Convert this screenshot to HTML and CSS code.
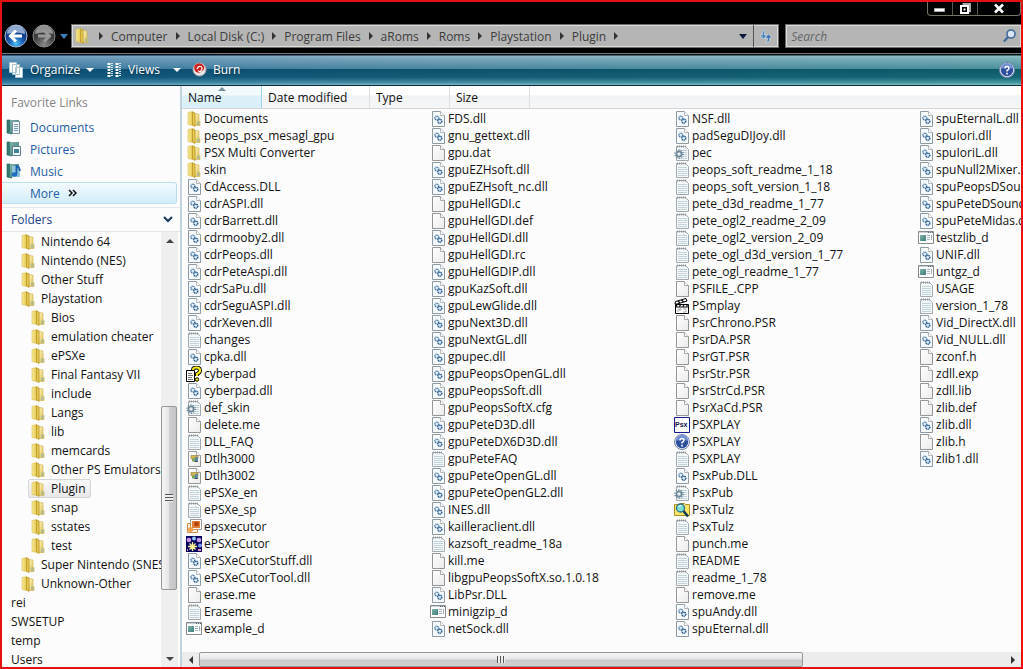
FILE: index.html
```html
<!DOCTYPE html>
<html lang="en">
<head>
    <meta charset="utf-8">
    <title>Plugin</title>
    <link rel="stylesheet" href="styles.css">
</head>
<body>
    <!-- icon sprite -->
    <svg class="sprite" aria-hidden="true">
        <defs>
            <linearGradient id="gold" x1="0" x2="1"><stop offset="0" stop-color="#f7eb9c"/><stop offset="1" stop-color="#e2c444"/></linearGradient>
            <linearGradient id="goldPale" x1="0" x2="1" y2="1"><stop offset="0" stop-color="#fff6bf"/><stop offset="1" stop-color="#dcbc48"/></linearGradient>
            <linearGradient id="paper" x2="1" y2="1"><stop offset="0" stop-color="#fff"/><stop offset="1" stop-color="#ebebeb"/></linearGradient>
            <linearGradient id="teal" x2="1" y2="1"><stop offset="0" stop-color="#7fb3a8"/><stop offset="1" stop-color="#3c7c7c"/></linearGradient>
            <radialGradient id="blueBall" cy=".85"><stop offset="0" stop-color="#4fc4f5"/><stop offset=".6" stop-color="#1c62b8"/><stop offset="1" stop-color="#153f86"/></radialGradient>
            <radialGradient id="greyBall" cy=".9"><stop offset="0" stop-color="#8a8a8a"/><stop offset="1" stop-color="#3c3c3c"/></radialGradient>
        </defs>
        <symbol id="folder" viewBox="0 0 16 16">
            <path d="M2 1.500l5-1v14l-5-1z" fill="url(#gold)" stroke="#d8bc50" stroke-width=".6"/>
            <path d="M8.500 2.500l4.500 .5v6.500l1 1v4H8.500z" fill="url(#goldPale)" stroke="#cdae48" stroke-width=".6"/>
            <path d="M6.500 1l2.500 1v13.500L6.500 14z" fill="#e6c84c" stroke="#b9962c" stroke-width=".8"/>
            <path d="M11 10.500h2.500V14H11z" fill="#aebc96"/>
        </symbol>
        <symbol id="page" viewBox="0 0 16 16">
            <path d="M2.500 .5h8l4 4v11h-12z" fill="url(#paper)" stroke="#969696"/>
            <path d="M10.500 .5v4h4" fill="#fff" stroke="#a8a8a8"/>
        </symbol>
        <symbol id="dll" viewBox="0 0 16 16">
            <path d="M2.500 .5h8l4 4v11h-12z" fill="#f6fafd" stroke="#8f9ba3"/>
            <path d="M10.500 .5v4h4" fill="#fff" stroke="#b4b8ba"/>
            <circle cx="6.800" cy="7" r="1.900" fill="#e4f0fa" stroke="#4b7aa8" stroke-width="1.400" stroke-dasharray="1.200 .5"/>
            <circle cx="9.800" cy="10.200" r="2" fill="#e4f0fa" stroke="#24588c" stroke-width="1.400" stroke-dasharray="1.300 .5"/>
        </symbol>
        <symbol id="text" viewBox="0 0 16 16">
            <path d="M2.500 1.500h9l3 3v11h-12z" fill="#f4f8f9" stroke="#a3a9ac"/>
            <path d="M3 1.500h9" stroke="#8d9599" stroke-width="2" stroke-dasharray="1 1"/>
            <path d="M4 5.500h9M4 7.500h9M4 9.500h9M4 11.500h9M4 13.500h9" stroke="#c0d2da"/>
        </symbol>
        <symbol id="config" viewBox="0 0 16 16">
            <use href="#text"/>
            <circle cx="5" cy="9" r="2.500" fill="#e4edf2" stroke="#6d8797" stroke-width="1.500"/>
            <circle cx="5" cy="9" r="4" fill="none" stroke="#6d8797" stroke-width="1.500" stroke-dasharray="1.300 1.213"/>
        </symbol>
        <symbol id="zip" viewBox="0 0 16 16">
            <use href="#page"/>
            <path d="M5 4.500h7v3H5z" fill="#d6b64a" stroke="#8a7a3a" stroke-width=".6"/>
            <path d="M9 6h3v5H9z" fill="#5f87a2"/>
            <path d="M6 7.500h3v3H6z" fill="#7da35c"/>
            <path d="M8.500 10.500h3" stroke="#3c4a52"/>
        </symbol>
        <symbol id="app" viewBox="0 0 16 16">
            <path d="M.5 1.500h15v12H.5z" fill="#fff" stroke="#858b8f"/>
            <path d="M1 2.500h14" stroke="#c8d0d5"/>
            <path d="M10 2.500h1M12 2.500h1M14 2.500h1" stroke="#5c6870"/>
            <path d="M2 5h6v6H2z" fill="url(#teal)"/>
            <path d="M9 5.500h3M9 7.500h3M9 9.500h3M13.500 5v5" stroke="#a2b2bc"/>
        </symbol>
        <symbol id="winhelp" viewBox="0 0 16 16">
            <path d="M.5 4.500h8v11h-8z" fill="#fff" stroke="#000"/>
            <path d="M2 7.500h4M2 9.500h5M2 11.500h4M2 13.500h5" stroke="#777"/>
            <path d="M7 4Q7 1.500 10.500 1.500T14 4.500Q14 6.500 11 8v2" fill="none" stroke="#000" stroke-width="4"/>
            <path d="M7 4Q7 1.500 10.500 1.500T14 4.500Q14 6.500 11 8v2" fill="none" stroke="#f4ee20" stroke-width="2.200"/>
            <circle cx="11" cy="13.500" r="1.700" fill="#f4ee20" stroke="#000"/>
        </symbol>
        <symbol id="slides" viewBox="0 0 16 16">
            <path d="M4.500 .5h11v10h-11z" fill="#fff" stroke="#9b9b9b"/>
            <path d="M6 2h8v7H6z" fill="#e08038"/>
            <circle cx="10.500" cy="5" r="2.400" fill="#b8400f"/>
            <path d="M1.500 4.500h3v6h7v3h-10z" fill="#fdf3e4" stroke="#cf8d4c"/>
            <circle cx="4.500" cy="10.500" r="2.500" fill="#f1a04a"/>
        </symbol>
        <symbol id="cutor" viewBox="0 0 16 16">
            <path d="M0 0h16v16H0z" fill="#04045c"/>
            <circle cx="3" cy="4" r="2.300" fill="#c79be8"/>
            <circle cx="8" cy="2.500" r="2" fill="#8ec9ee"/>
            <circle cx="13" cy="4" r="2.300" fill="#c79be8"/>
            <circle cx="14" cy="9.500" r="2" fill="#7c9be8"/>
            <path d="M6.500 6v9M2 10.500h9M3.500 7.500l6 6M9.500 7.500l-6 6" stroke="#fff79a" stroke-width="1.300"/>
            <path d="M12 14h3M1 14h1" stroke="#e88ac4" stroke-width="2"/>
        </symbol>
        <symbol id="clapper" viewBox="0 0 16 16">
            <path d="M1.500 6.500h13v9h-13z" fill="#fff" stroke="#000"/>
            <path d="M1 6l.500-2.500L12 .5l1 2.500L3 6z" fill="#fff" stroke="#000"/>
            <path d="M4 3l2 2M7.500 2l2 2M3 6.500l-1 2M6.500 6.500l-1 2M10 6.500l-1 2M13.500 6.500l-1 2" stroke="#000" stroke-width="1.200"/>
            <path d="M2 9h12" stroke="#000"/>
            <path d="M4 11h3v1H4v2M9 14h3v-3H9" fill="none" stroke="#aaa"/>
        </symbol>
        <symbol id="help" viewBox="0 0 16 16">
            <circle cx="8" cy="8" r="7.500" fill="#e8eefa" stroke="#7583a6"/>
            <circle cx="8" cy="8" r="6.200" fill="#2e4f9e"/>
            <path d="M2 7a6 6 0 0112 0q-6-3-12 0z" fill="#6f8fd2"/>
            <path d="M6 6.500q0-2 2-2t2 1.800q0 1.200-2 2.200v1" fill="none" stroke="#fff" stroke-width="1.500"/>
            <path d="M7.200 10.800h1.600v1.600H7.200z" fill="#fff"/>
        </symbol>
        <symbol id="find" viewBox="0 0 16 16">
            <path d="M.5 2.500h5l1-1h4l1 1h4v11H.5z" fill="#f8e66c" stroke="#a88f26"/>
            <path d="M9 8.500l5 6" stroke="#153a52" stroke-width="2.600"/>
            <circle cx="6.500" cy="6" r="4" fill="#7fe0d6" stroke="#2b6d86" stroke-width="1.300"/>
            <path d="M4.500 5q1-2 3-1.500" fill="none" stroke="#fff"/>
        </symbol>
        <symbol id="fav" viewBox="0 0 16 16">
            <path d="M1 1h3l2 1v13l-5-1z" fill="#347a70" stroke="#225f5c" stroke-width=".6"/>
            <path d="M4 1h9v13H4z" fill="url(#teal)"/>
        </symbol>
        <symbol id="favdoc" viewBox="0 0 16 16">
            <use href="#fav"/>
            <path d="M6.500 2.500h7v12h-7z" fill="#f3f8fb" stroke="#7c929c"/>
            <path d="M8 5.500h4M8 7.500h4M8 9.500h4M8 11.500h4" stroke="#6f9bb8"/>
        </symbol>
        <symbol id="favpic" viewBox="0 0 16 16">
            <use href="#fav"/>
            <path d="M6.500 5.500h8v9h-8z" fill="#f3f8fb" stroke="#5e7f8c"/>
            <path d="M8 8h5v4H8z" fill="#3f8297"/>
        </symbol>
        <symbol id="favmusic" viewBox="0 0 16 16">
            <use href="#fav"/>
            <path d="M6 3h8v11H6z" fill="#8fc4dc"/>
            <path d="M10.500 2v9M10.500 3q3 1 3.500 5" fill="none" stroke="#1b5fae" stroke-width="1.800"/>
            <ellipse cx="8.500" cy="11.500" rx="2.800" ry="2.200" fill="#1f6fc4"/>
        </symbol>
    </svg>

    <div class="window">
        <div class="titlebar">
            <div class="window-buttons">
                <button aria-label="Minimize"><svg width="12" height="12"><path d="M.5 5.500h10v3H.5z" fill="#fff" stroke="#aaa"/></svg></button>
                <button aria-label="Restore"><svg width="12" height="12"><path d="M3.500 1h7.500v7.500h-1" fill="none" stroke="#ddd" stroke-width="1.500"/><path d="M2 3h7v7H2z" fill="none" stroke="#fff" stroke-width="2"/><path d="M4.500 5.500h2v2h-2z" fill="#fff"/></svg></button>
                <button class="close" aria-label="Close"><svg width="12" height="12"><path d="M2 1.500l8 8M10 1.500l-8 8" stroke="#fff" stroke-width="2.600"/></svg></button>
            </div>
        </div>

        <div class="navbar">
            <div class="travel">
                <button aria-label="Back"><svg width="24" height="24" viewBox="0 0 24 24"><circle cx="12" cy="12" r="11" fill="url(#blueBall)" stroke="#a9bddb"/><path d="M3 10a9 9 0 0118 0q-9-3-18 0z" fill="#c4d8f2" opacity=".7"/><path d="M18 12H7M12 6.500L6.500 12l5.500 5.500" fill="none" stroke="#fff" stroke-width="3"/></svg></button>
                <button aria-label="Forward"><svg width="24" height="24" viewBox="0 0 24 24"><circle cx="12" cy="12" r="11" fill="url(#greyBall)" stroke="#8c8c8c"/><path d="M3 10a9 9 0 0118 0q-9-3-18 0z" fill="#ccc" opacity=".6"/><path d="M6 12h11M12 6.500l5.500 5.500-5.500 5.500" fill="none" stroke="#999" stroke-width="3"/></svg></button>
                <button aria-label="Recent pages"><svg width="8" height="5"><path d="M0 0h8L4 5z" fill="#3f7fb5"/></svg></button>
            </div>
            <div class="address">
                <svg class="icon"><use href="#folder"/></svg>
                <nav class="crumbs" id="crumbs"></nav>
                <button class="history" aria-label="Previous locations"><svg width="8" height="5"><path d="M0 0h8L4 5z" fill="#0d1a40"/></svg></button>
                <button class="refresh" aria-label="Refresh"><svg width="16" height="16"><path d="M7.500 2L4.500 4v3H2l3.500 4L9 7H6.500V5z" fill="#4a86c0" stroke="#e4ecf4" stroke-width=".5"/><path d="M8 14.500l3.500-1.500v-3H14l-3.500-4L7 10h2.500v2z" fill="#3a72b4" stroke="#e4ecf4" stroke-width=".5"/></svg></button>
            </div>
            <div class="search">
                <input type="text" placeholder="Search" aria-label="Search">
                <button aria-label="Go"><svg width="14" height="14"><circle cx="8" cy="5" r="4" fill="#dbe6f2" stroke="#3f6a9c" stroke-width="1.600"/><path d="M5 8l-4 4.500" stroke="#3f6a9c" stroke-width="2.200"/></svg></button>
            </div>
        </div>

        <div class="toolbar">
            <button class="organize"><svg width="16" height="16"><path d="M1.500 .5h7v10h-7zM4.500 2.500h7v10h-7zM7.500 5.500h7v10h-7z" fill="#fff" stroke="#a9c4d2"/></svg>Organize<svg width="8" height="4"><path d="M0 0h8L4 4z" fill="#fff"/></svg></button>
            <button class="views"><svg width="16" height="14"><path d="M2 0v14M10 0v14" stroke="#fff" stroke-width="3" stroke-dasharray="2 1"/><path d="M5 0v14M13 0v14" stroke="#d4e4ec" stroke-width="2" stroke-dasharray="1 1"/></svg>Views<svg width="8" height="4"><path d="M0 0h8L4 4z" fill="#fff"/></svg></button>
            <button class="burn"><svg width="15" height="15"><circle cx="7.500" cy="7.500" r="6.500" fill="#e6e6e6" stroke="#aaa"/><path d="M3 3q5-4 9 1 1 4-2 5-2 3-6 1Q1 7 3 3z" fill="#cf2020"/><path d="M5 7q1-3 3.500-2.500T9.500 8 6 8.500" fill="none" stroke="#fff" stroke-width="1.200"/></svg>Burn</button>
            <button class="help" aria-label="Help"><svg class="icon"><use href="#help"/></svg></button>
        </div>

        <div class="content">
            <aside class="sidebar">
                <div class="favorites">
                    <h2>Favorite Links</h2>
                    <a href="#"><svg class="icon"><use href="#favdoc"/></svg>Documents</a>
                    <a href="#"><svg class="icon"><use href="#favpic"/></svg>Pictures</a>
                    <a href="#"><svg class="icon"><use href="#favmusic"/></svg>Music</a>
                    <a href="#" class="more">More<svg width="9" height="8"><path d="M1 1l3 3-3 3M5 1l3 3-3 3" fill="none" stroke="#111" stroke-width="1.500"/></svg></a>
                </div>
                <button class="folders-head">Folders<svg width="10" height="7"><path d="M1 1l4 4 4-4" fill="none" stroke="#16365c" stroke-width="2"/></svg></button>
                <div class="tree-wrap">
                    <ul class="tree" id="tree"></ul>
                    <div class="vscroll">
                        <button aria-label="Scroll up"><svg width="8" height="4"><path d="M4 0l4 4H0z" fill="#444"/></svg></button>
                        <div class="vtrack"><div class="vthumb"><i></i></div></div>
                        <button aria-label="Scroll down"><svg width="8" height="4"><path d="M0 0h8L4 4z" fill="#444"/></svg></button>
                    </div>
                </div>
            </aside>

            <main class="pane">
                <div class="columns">
                    <button class="col-name sorted">Name<svg class="sort-arrow" width="8" height="4"><path d="M4 0l4 4H0z" fill="#7a93a3"/></svg></button>
                    <button class="col-date">Date modified</button>
                    <button class="col-type">Type</button>
                    <button class="col-size">Size</button>
                </div>
                <ul class="files" id="files"></ul>
                <div class="hscroll">
                    <button aria-label="Scroll left"><svg width="4" height="8"><path d="M4 0v8L0 4z" fill="#333"/></svg></button>
                    <div class="htrack"><div class="hthumb"><i></i></div></div>
                    <button aria-label="Scroll right"><svg width="4" height="8"><path d="M0 0v8l4-4z" fill="#333"/></svg></button>
                </div>
            </main>
        </div>
    </div>

    <script src="script.js"></script>
</body>
</html>
```
FILE: styles.css
```css
* {
    box-sizing: border-box;
}

html, body {
    height: 100%;
    margin: 0;
}

body {
    font-family: "Open Sans", "Noto Sans", sans-serif;
    font-size: 12px;
    line-height: 17px;
    color: #111;
    overflow: hidden;
}

button {
    font: inherit;
    color: inherit;
    background: none;
    border: 0;
    padding: 0;
    margin: 0;
    display: flex;
    align-items: center;
}

ul {
    list-style: none;
    margin: 0;
    padding: 0;
}

a {
    color: inherit;
    text-decoration: none;
}

svg {
    flex: none;
}

.sprite {
    position: absolute;
    width: 0;
    height: 0;
}

.icon {
    width: 16px;
    height: 16px;
}

.psx-text {
    font: bold 7px "Liberation Sans", sans-serif;
    fill: #10104a;
}

.window {
    height: 100vh;
    display: flex;
    flex-direction: column;
    border: 2px solid #e51111;
    background: #000;
}

/* title bar */
.titlebar {
    height: 22px;
    display: flex;
    justify-content: flex-end;
    align-items: flex-start;
}

.window-buttons {
    display: flex;
    height: 14px;
    border: 1px solid #777268;
    border-top: 0;
    border-radius: 0 0 4px 4px;
}

.window-buttons button {
    width: 25px;
    justify-content: center;
    border-right: 1px solid #5c5850;
}

.window-buttons .close {
    width: 42px;
    border-right: 0;
}

/* address bar */
.navbar {
    display: flex;
    height: 29px;
    align-items: flex-start;
    gap: 6px;
}

.travel {
    display: flex;
    width: 63px;
    gap: 4px;
    padding-left: 2px;
}

.address, .search {
    display: flex;
    align-items: center;
    height: 24px;
    background: #b5b5b5;
    border: 1px solid #6c6c68;
    box-shadow: inset 0 0 0 1px #dcdcdc;
    color: #3c3c3c;
}

.address {
    flex: 3 1 0;
    padding-left: 2px;
}

.search {
    flex: 1 1 0;
    border-right: 0;
}

.crumbs {
    flex: 1;
    display: flex;
    padding-left: 9px;
}

.crumbs span {
    display: flex;
    align-items: center;
}

.crumbs svg {
    margin-right: 8px;
}

.crumbs a {
    margin-right: 8px;
}

.history {
    width: 21px;
    height: 22px;
    justify-content: center;
}

.refresh {
    width: 25px;
    height: 22px;
    justify-content: center;
    border-left: 1px solid #555;
}

.search input {
    flex: 1;
    min-width: 0;
    border: 0;
    background: none;
    padding: 0 5px;
    font: inherit;
    outline: none;
}

.search input::placeholder {
    color: #666;
    font-style: italic;
    opacity: 1;
}

.search button {
    padding-right: 4px;
}

/* toolbar */
.toolbar {
    display: flex;
    align-items: center;
    height: 33px;
    padding: 0 6px;
    color: #fff;
    border-top: 1px solid #777;
    border-bottom: 1px solid #0a2c3c;
    background:
        linear-gradient(to right, rgba(10, 70, 160, 0.3), rgba(20, 70, 140, 0.15) 40%, rgba(20, 140, 120, 0.15)),
        linear-gradient(to bottom, #000 1px, #a4c8d2 2px, #8ab4c2 5px, #5090a2 48%, #0d5264 50%, #155f74 75%, #4d98a4 92%, #8cc8cc 100%);
}

.toolbar button {
    text-shadow: 0 1px 2px #0a3044;
}

.organize {
    gap: 6px;
    width: 99px;
}

.views {
    gap: 5px;
    width: 85px;
}

.views svg:last-child {
    margin-left: 8px;
}

.burn {
    gap: 6px;
}

.toolbar .help {
    margin-left: auto;
}

.content {
    flex: 1;
    min-height: 0;
    display: flex;
    background: #fcfcfc;
}

/* sidebar */
.sidebar {
    width: 180px;
    flex: none;
    display: flex;
    flex-direction: column;
    border-right: 2px solid #c3d3dc;
}

.favorites {
    padding: 6px 3px 3px 0;
    border-bottom: 1px solid #e3e8ec;
}

.favorites h2 {
    margin: 0;
    padding-left: 9px;
    font-size: 12px;
    font-weight: normal;
    line-height: 22px;
    color: #858585;
}

.favorites h2 + a {
    margin-top: 2px;
}

.favorites a {
    display: flex;
    align-items: center;
    height: 22px;
    gap: 8px;
    padding-left: 4px;
    color: #1e5da8;
}

.favorites .more {
    padding-left: 28px;
    border: 1px solid #b9dff0;
    border-left: 0;
    border-radius: 0 3px 3px 0;
    background: linear-gradient(to bottom, #f2fafe, #d3edfa);
}

.folders-head {
    height: 24px;
    padding: 0 7px 0 9px;
    justify-content: space-between;
    color: #1c3f87;
    border-bottom: 1px solid #dfe5e9;
}

.tree-wrap {
    flex: 1;
    min-height: 0;
    display: flex;
    padding-right: 2px;
}

.tree {
    flex: 1;
    min-width: 0;
    overflow: hidden;
}

.tree li {
    height: 19px;
    display: flex;
}

.tree a {
    display: flex;
    align-items: center;
    gap: 5px;
    padding: 0 4px 0 1px;
    border: 1px solid transparent;
    border-radius: 2px;
    white-space: nowrap;
}

.tree .level0 {
    padding-left: 7px;
}

.tree .level2 {
    padding-left: 16px;
}

.tree .level3 {
    padding-left: 26px;
}

.tree .selected a {
    border-color: #d5d5d5;
    background: linear-gradient(to bottom, #fafafa, #e8e8e8);
}

.vscroll {
    width: 17px;
    flex: none;
    display: flex;
    flex-direction: column;
    background: #efefef;
}

.vscroll button {
    height: 17px;
    justify-content: center;
}

.vtrack {
    flex: 1;
    display: flex;
    flex-direction: column;
    justify-content: flex-end;
    padding: 0 1px 60px 0;
}

.vthumb {
    height: 54%;
    max-height: 186px;
    min-height: 20px;
    flex: none;
    display: flex;
    align-items: center;
    justify-content: center;
    border: 1px solid #979797;
    border-radius: 2px;
    background: linear-gradient(to right, #f5f5f5, #e6e6e8 48%, #cfcfd1 52%, #c4c4c6);
}

.vthumb i {
    width: 8px;
    height: 8px;
    background: repeating-linear-gradient(to bottom, #555 0 1px, #eee 1px 3px);
}

/* file pane */
.pane {
    flex: 1;
    min-width: 0;
    display: flex;
    flex-direction: column;
}

.columns {
    display: flex;
    height: 23px;
    flex: none;
    border-bottom: 1px solid #d5d5d5;
    background: linear-gradient(to bottom, #fff 40%, #f2f3f5 45%, #f5f6f7);
}

.columns button {
    position: relative;
    padding-left: 6px;
    border-right: 1px solid #dedfe1;
}

.columns .col-name {
    width: 80px;
}

.columns .col-date {
    width: 108px;
}

.columns .col-type,
.columns .col-size {
    width: 80px;
}

.columns .sorted {
    border-right-color: #9dd5ec;
    background: linear-gradient(to bottom, #f3fafd 40%, #dcf0f9 45%, #d9eff9);
}

.sort-arrow {
    position: absolute;
    top: 1px;
    left: 50%;
    margin-left: -4px;
}

.files {
    flex: 1;
    min-height: 0;
    overflow: hidden;
    padding: 1px 0 0 4px;
    display: grid;
    grid-auto-flow: column;
    grid-template-rows: repeat(31, 17px);
    grid-auto-columns: 244px;
}

.files a {
    display: inline-flex;
    align-items: center;
    gap: 2px;
    white-space: nowrap;
    height: 17px;
}

.hscroll {
    display: flex;
    height: 15px;
    flex: none;
    background: #ececed;
}

.hscroll button {
    width: 17px;
    justify-content: center;
}

.htrack {
    flex: 1;
}

.hthumb {
    width: 75%;
    height: 15px;
    display: flex;
    align-items: center;
    justify-content: center;
    border: 1px solid #979797;
    border-radius: 2px;
    background: linear-gradient(to bottom, #f5f5f5, #e6e6e8 45%, #c9c9cb 55%, #d2d2d4);
}

.hthumb i {
    width: 8px;
    height: 7px;
    background: repeating-linear-gradient(to right, #555 0 1px, #eee 1px 3px);
}
```
FILE: script.js
```js
const crumbs = ["Computer", "Local Disk (C:)", "Program Files", "aRoms", "Roms", "Playstation", "Plugin"];

// [level, name]
const folders = [
    [2, "Nintendo 64"], [2, "Nintendo (NES)"], [2, "Other Stuff"], [2, "Playstation"],
    [3, "Bios"], [3, "emulation cheater"], [3, "ePSXe"], [3, "Final Fantasy VII"],
    [3, "include"], [3, "Langs"], [3, "lib"], [3, "memcards"], [3, "Other PS Emulators"],
    [3, "Plugin"], [3, "snap"], [3, "sstates"], [3, "test"],
    [2, "Super Nintendo (SNES)"], [2, "Unknown-Other"],
    [0, "rei"], [0, "SWSETUP"], [0, "temp"], [0, "Users"]
];

// "name" or "name|icon", .dll files get their icon from the extension
const files = [
    "Documents|folder", "peops_psx_mesagl_gpu|folder", "PSX Multi Converter|folder", "skin|folder",
    "CdAccess.DLL", "cdrASPI.dll", "cdrBarrett.dll", "cdrmooby2.dll", "cdrPeops.dll", "cdrPeteAspi.dll",
    "cdrSaPu.dll", "cdrSeguASPI.dll", "cdrXeven.dll", "changes|text", "cpka.dll", "cyberpad|winhelp",
    "cyberpad.dll", "def_skin|config", "delete.me", "DLL_FAQ|text", "Dtlh3000|zip", "Dtlh3002|zip",
    "ePSXe_en|text", "ePSXe_sp|text", "epsxecutor|slides", "ePSXeCutor|cutor", "ePSXeCutorStuff.dll",
    "ePSXeCutorTool.dll", "erase.me", "Eraseme|text", "example_d|app",

    "FDS.dll", "gnu_gettext.dll", "gpu.dat", "gpuEZHsoft.dll", "gpuEZHsoft_nc.dll", "gpuHellGDI.c",
    "gpuHellGDI.def", "gpuHellGDI.dll", "gpuHellGDI.rc", "gpuHellGDIP.dll", "gpuKazSoft.dll",
    "gpuLewGlide.dll", "gpuNext3D.dll", "gpuNextGL.dll", "gpupec.dll", "gpuPeopsOpenGL.dll",
    "gpuPeopsSoft.dll", "gpuPeopsSoftX.cfg", "gpuPeteD3D.dll", "gpuPeteDX6D3D.dll", "gpuPeteFAQ|text",
    "gpuPeteOpenGL.dll", "gpuPeteOpenGL2.dll", "INES.dll", "kailleraclient.dll", "kazsoft_readme_18a|text",
    "kill.me", "libgpuPeopsSoftX.so.1.0.18", "LibPsr.DLL", "minigzip_d|app", "netSock.dll",

    "NSF.dll", "padSeguDIJoy.dll", "pec|config", "peops_soft_readme_1_18|text", "peops_soft_version_1_18|text",
    "pete_d3d_readme_1_77|text", "pete_ogl2_readme_2_09|text", "pete_ogl2_version_2_09|text",
    "pete_ogl_d3d_version_1_77|text", "pete_ogl_readme_1_77|text", "PSFILE_.CPP", "PSmplay|clapper",
    "PsrChrono.PSR", "PsrDA.PSR", "PsrGT.PSR", "PsrStr.PSR", "PsrStrCd.PSR", "PsrXaCd.PSR",
    "PSXPLAY|psx", "PSXPLAY|help", "PSXPLAY|text", "PsxPub.DLL", "PsxPub|config", "PsxTulz|find",
    "PsxTulz|text", "punch.me", "README|text", "readme_1_78|text", "remove.me", "spuAndy.dll", "spuEternal.dll",

    "spuEternalL.dll", "spuIori.dll", "spuIoriL.dll", "spuNull2Mixer.dll", "spuPeopsDSound.dll",
    "spuPeteDSound.dll", "spuPeteMidas.dll", "testzlib_d|app", "UNIF.dll", "untgz_d|app", "USAGE|text",
    "version_1_78|text", "Vid_DirectX.dll", "Vid_NULL.dll", "zconf.h", "zdll.exp", "zdll.lib",
    "zlib.def", "zlib.dll", "zlib.h", "zlib1.dll"
];

function icon(name) {
    // this one carries a label, so it is not in the sprite
    if (name === "psx") {
        return '<svg class="icon"><path d="M.5 .5h15v15H.5z" fill="#fff" stroke="#1a1a8c"/>' +
            '<text x="1" y="10" class="psx-text">Psx</text></svg>';
    }
    return `<svg class="icon"><use href="#${name}"/></svg>`;
}

const arrow = '<svg width="4" height="8"><path d="M0 0v8l4-4z" fill="#333"/></svg>';

document.getElementById("crumbs").innerHTML =
    crumbs.map(c => `<span>${arrow}<a href="#">${c}</a></span>`).join("") + `<span>${arrow}</span>`;

document.getElementById("tree").innerHTML = folders.map(([level, name]) => {
    const selected = name === "Plugin" ? " selected" : "";
    return `<li class="level${level}${selected}"><a href="#">${level ? icon("folder") : ""}${name}</a></li>`;
}).join("");

document.getElementById("files").innerHTML = files.map(entry => {
    const [name, type] = entry.split("|");
    const kind = type || (/\.dll$/i.test(name) ? "dll" : "page");
    return `<li><a href="#">${icon(kind)}${name}</a></li>`;
}).join("");
```
